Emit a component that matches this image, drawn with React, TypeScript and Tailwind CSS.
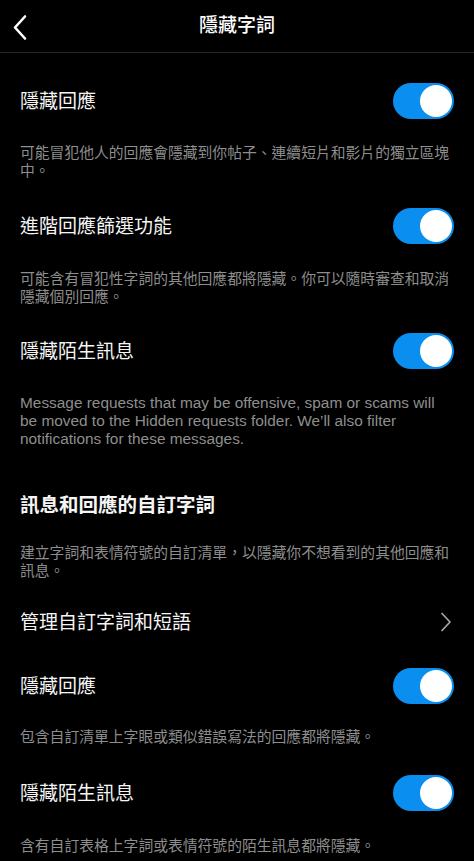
import React, { useState } from "react";

const FONT = { fontFamily: '"Liberation Sans", "Noto Sans CJK TC", sans-serif' };

function Toggle({ on, onChange }: { on: boolean; onChange: () => void }) {
    return (
        <button
            onClick={onChange}
            className={`flex h-[36px] w-[61px] shrink-0 items-center rounded-full px-[2px] ${on ? "justify-end bg-[#0a8ef0]" : "justify-start bg-[#3a3a3a]"}`}
        >
            <span className="block h-[32px] w-[32px] rounded-full bg-white" />
        </button>
    );
}

function ToggleRow({ label, on, onChange, className }: { label: string; on: boolean; onChange: () => void; className?: string }) {
    return (
        <div className={`flex h-[48px] items-center justify-between pl-[20px] pr-[20px] ${className ?? ""}`}>
            <span className="text-[19px] leading-none text-[#f5f5f5]">{label}</span>
            <Toggle on={on} onChange={onChange} />
        </div>
    );
}

function Desc({ children, className }: { children: React.ReactNode; className?: string }) {
    return (
        <p className={`px-[20px] text-[14.8px] leading-[18px] text-[#8e8e8e] ${className ?? ""}`}>{children}</p>
    );
}

export default function App() {
    const [toggles, setToggles] = useState([true, true, true, true, true]);
    const flip = (i: number) => setToggles((t) => t.map((v, idx) => (idx === i ? !v : v)));

    return (
        <div className="min-h-[861px] w-full bg-black pb-[8px]" style={FONT}>
            <header className="relative flex h-[53px] items-center justify-center border-b border-[#262626]">
                <button className="absolute left-[10px] top-[12px] p-[2px]" aria-label="返回">
                    <svg width="16" height="27" viewBox="0 0 16 27" fill="none">
                        <path d="M13 2.5L3 13.5L13 24.5" stroke="#fff" strokeWidth="2.6" strokeLinecap="round" strokeLinejoin="round" />
                    </svg>
                </button>
                <h1 className="text-[19px] font-medium text-white">隱藏字詞</h1>
            </header>

            <ToggleRow label="隱藏回應" on={toggles[0]} onChange={() => flip(0)} className="mt-[24px]" />
            <Desc className="mt-[19px]">可能冒犯他人的回應會隱藏到你帖子、連續短片和影片的獨立區塊中。</Desc>

            <ToggleRow label="進階回應篩選功能" on={toggles[1]} onChange={() => flip(1)} className="mt-[22px]" />
            <Desc className="mt-[20px]">可能含有冒犯性字詞的其他回應都將隱藏。你可以隨時審查和取消隱藏個別回應。</Desc>

            <ToggleRow label="隱藏陌生訊息" on={toggles[2]} onChange={() => flip(2)} className="mt-[21px]" />
            <Desc className="mt-[19px] text-[15.4px] leading-[17.5px]">
                Message requests that may be offensive, spam or scams will be moved to the Hidden requests folder. We’ll also filter notifications for these messages.
            </Desc>

            <h2 className="mt-[45px] px-[20px] text-[19.5px] font-semibold leading-[24px] text-[#f5f5f5]">訊息和回應的自訂字詞</h2>
            <Desc className="mt-[27px]">建立字詞和表情符號的自訂清單，以隱藏你不想看到的其他回應和訊息。</Desc>

            <button className="mt-[18px] flex h-[48px] w-full items-center justify-between px-[20px] text-left">
                <span className="text-[19px] leading-none text-[#f5f5f5]">管理自訂字詞和短語</span>
                <svg width="12" height="20" viewBox="0 0 12 20" fill="none" className="mr-[2px]">
                    <path d="M2 1.5L10 10L2 18.5" stroke="#a8a8a8" strokeWidth="1.7" strokeLinecap="round" strokeLinejoin="round" />
                </svg>
            </button>

            <ToggleRow label="隱藏回應" on={toggles[3]} onChange={() => flip(3)} className="mt-[16px]" />
            <Desc className="mt-[18px]">包含自訂清單上字眼或類似錯誤寫法的回應都將隱藏。</Desc>

            <ToggleRow label="隱藏陌生訊息" on={toggles[4]} onChange={() => flip(4)} className="mt-[23px]" />
            <Desc className="mt-[20px]">含有自訂表格上字詞或表情符號的陌生訊息都將隱藏。</Desc>
        </div>
    );
}
